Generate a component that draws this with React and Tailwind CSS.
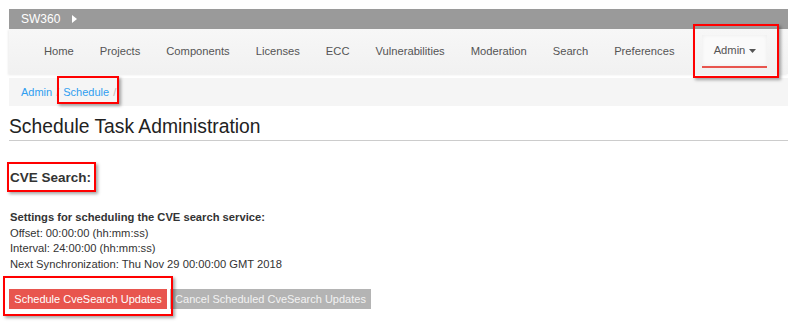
import React from 'react';

const navItems = [
  'Home',
  'Projects',
  'Components',
  'Licenses',
  'ECC',
  'Vulnerabilities',
  'Moderation',
  'Search',
  'Preferences',
];

// red annotation frame drawn over the marked element
function Marker({ className }) {
  return (
    <span
      aria-hidden
      className={`pointer-events-none absolute border-2 border-[#ff0000] shadow-[2px_2px_3px_rgba(0,0,0,0.35)] ${className}`}
    />
  );
}

export default function App() {
  return (
    <div className="min-h-screen bg-white pt-[9px] font-['Liberation_Sans',Arial,sans-serif] text-[#333]">
      <div className="ml-[9px]">
        <div className="flex h-[20px] items-center bg-[#9a9a9a] pl-3 text-[12px] text-white">
          <span>SW360</span>
          <svg viewBox="0 0 5 8" className="ml-[12px] h-[8px] w-[5px]" fill="white">
            <path d="M0 0 L5 4 L0 8 Z" />
          </svg>
        </div>

        <nav className="flex h-[45px] items-center bg-gradient-to-b from-[#f7f7f7] to-[#f1f1f1] pl-[22px] text-[11.2px] text-[#555] shadow-[-1px_1px_2px_rgba(0,0,0,0.08)]">
          {navItems.map((item) => (
            <span key={item} className="px-[13px]">
              {item}
            </span>
          ))}
          <div className="relative ml-[15px]">
            <div className="flex h-[33px] w-[65px] items-center justify-center gap-[4px] border-b-[2px] border-[#e8554e] bg-[#fafafa] shadow-[inset_0_0_4px_rgba(0,0,0,0.06)]">
              <span>Admin</span>
              <svg viewBox="0 0 7 4" className="h-[4px] w-[7px]" fill="#555">
                <path d="M0 0 L7 0 L3.5 4 Z" />
              </svg>
            </div>
            <Marker className="-left-[9px] -top-[11px] h-[54px] w-[86px]" />
          </div>
        </nav>
      </div>

      <div className="ml-[9px] mt-[4px] flex h-[28px] items-center bg-[#f5f5f5] pl-[12px] text-[11px]">
        <span className="text-[#2f9ef0]">Admin</span>
        <span className="mx-[4px] text-[#ccc]">/</span>
        <span className="relative text-[#2f9ef0]">
          Schedule
          <Marker className="-left-[6px] -top-[8px] h-[28px] w-[62px]" />
        </span>
        <span className="mx-[4px] text-[#bbb]">/</span>
      </div>

      <h1 className="ml-[9px] mt-[9px] border-b border-[#cccccc] pb-[1px] text-[19.3px] leading-[24px] text-[#222]">
        Schedule Task Administration
      </h1>

      <div className="ml-[10px] mt-[24px]">
        <h2 className="relative inline-block text-[13.5px] font-bold leading-[16px] text-[#333]">
          CVE Search:
          <Marker className="-left-[3px] -top-[8px] h-[30px] w-[89px]" />
        </h2>

        <div className="mt-[21px] text-[11.2px] leading-[15.7px] text-[#333]">
          <div className="font-bold">Settings for scheduling the CVE search service:</div>
          <div>Offset: 00:00:00 (hh:mm:ss)</div>
          <div>Interval: 24:00:00 (hh:mm:ss)</div>
          <div>Next Synchronization: Thu Nov 29 00:00:00 GMT 2018</div>
        </div>
      </div>

      <div className="ml-[9px] mt-[16px] flex gap-[3px] text-[11px]">
        <div className="relative">
          <button type="button" className="h-[20px] w-[158px] bg-[#e8554e] text-white">
            Schedule CveSearch Updates
          </button>
          <Marker className="-left-[6px] -top-[13px] h-[40px] w-[170px]" />
        </div>
        <button type="button" className="h-[20px] w-[201px] bg-[#b4b4b4] text-[#f2f2f2]">
          Cancel Scheduled CveSearch Updates
        </button>
      </div>
    </div>
  );
}
